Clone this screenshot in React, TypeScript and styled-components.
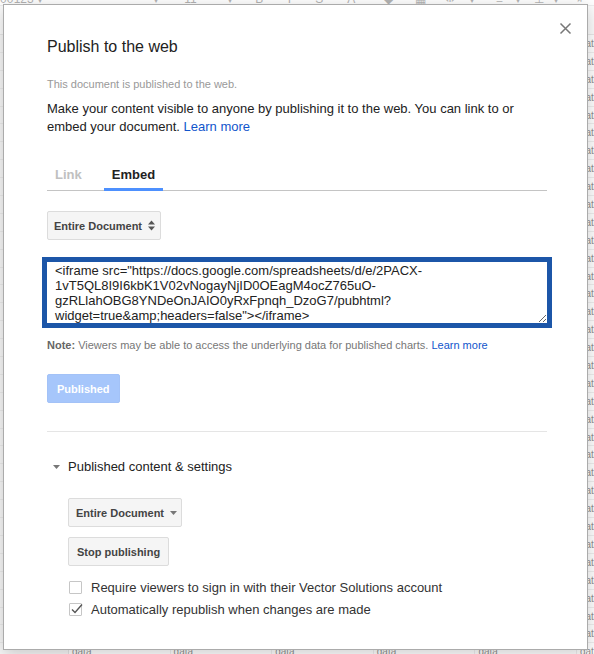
import { Fragment } from 'react';
import styled, { createGlobalStyle } from 'styled-components';

const GlobalStyle = createGlobalStyle`
  html, body {
    margin: 0;
    padding: 0;
    background: #fff;
  }
  body {
    font-family: Arial, "Liberation Sans", sans-serif;
  }
`;

const Page = styled.div`
  position: relative;
  width: 594px;
  height: 654px;
  overflow: hidden;
  background: #fff;
`;

/* ---------- spreadsheet behind the dialog ---------- */

const Toolbar = styled.div`
  display: flex;
  align-items: flex-end;
  height: 5px;
  overflow: hidden;
  color: #777;
  font-size: 12px;
  line-height: 12px;
`;

const ToolItem = styled.span<{ $w: number }>`
  flex: 0 0 ${(p) => p.$w}px;
  text-align: center;
  white-space: nowrap;
`;

const SheetHead = styled.div`
  height: 30px;
  border-top: 1px solid #e0e0e0;
  border-bottom: 1px solid #d8d8d8;
  box-sizing: border-box;
  background: #fafafa;
`;

const Grid = styled.div`
  display: grid;
  grid-template-columns: 69px repeat(6, 101.6px);
  grid-auto-rows: 17.9px;
`;

const RowHead = styled.div`
  background: #f3f3f3;
  border-right: 1px solid #d0d0d0;
  border-bottom: 1px solid #dcdcdc;
  box-sizing: border-box;
`;

const Cell = styled.div`
  box-sizing: border-box;
  border-right: 1px solid #e2e2e2;
  border-bottom: 1px solid #e2e2e2;
  padding-left: 3px;
  font-size: 10px;
  line-height: 17px;
  color: #333;
  white-space: nowrap;
  overflow: hidden;
`;

const Veil = styled.div`
  position: absolute;
  inset: 0;
  background: rgba(255, 255, 255, 0.45);
`;

/* ---------- dialog ---------- */

const Dialog = styled.div`
  position: absolute;
  left: 3px;
  top: 4px;
  width: 585px;
  height: 646px;
  box-sizing: border-box;
  padding: 32px 40px 0 43px;
  background: #fff;
  border: 1px solid rgba(0, 0, 0, 0.33);
  box-shadow: 0 4px 16px rgba(0, 0, 0, 0.2);
  color: #222;
`;

const CloseButton = styled.button`
  position: absolute;
  top: 17px;
  right: 15px;
  width: 13px;
  height: 13px;
  padding: 0;
  border: 0;
  background: none;
  display: flex;
`;

const Title = styled.h1`
  margin: 0;
  font-size: 16px;
  line-height: 20px;
  font-weight: normal;
  color: #222;
`;

const Status = styled.div`
  margin-top: 20px;
  font-size: 11px;
  line-height: 14px;
  color: #999;
`;

const Lead = styled.p`
  margin: 9px 0 0;
  font-size: 13px;
  line-height: 18px;
  color: #222;
`;

const Link = styled.a`
  color: #15c;
  text-decoration: none;
`;

const TabBar = styled.div`
  display: flex;
  gap: 14px;
  margin-top: 31px;
  border-bottom: 1px solid #c4c4c4;
`;

const Tab = styled.div<{ $active?: boolean }>`
  padding: 0 8px 5px;
  font-size: 13px;
  line-height: 16px;
  font-weight: bold;
  color: ${(p) => (p.$active ? '#222' : '#c0c0c0')};
  border-bottom: 3px solid ${(p) => (p.$active ? '#4d90fe' : 'transparent')};
  margin-bottom: -1px;
`;

const GreyButton = styled.button<{ $pad: string }>`
  display: inline-flex;
  align-items: center;
  gap: 6px;
  height: 29px;
  box-sizing: border-box;
  padding: ${(p) => p.$pad};
  border: 1px solid #dcdcdc;
  border-radius: 2px;
  background: #f5f5f5;
  font-family: inherit;
  font-size: 11px;
  font-weight: bold;
  color: #444;
  white-space: nowrap;
`;

const Block = styled.div<{ $top: number }>`
  margin-top: ${(p) => p.$top}px;
`;

const EmbedCode = styled.textarea`
  display: block;
  margin: 17px 0 0 -5px;
  width: 510px;
  height: 71px;
  box-sizing: border-box;
  border: 5px solid #1c56a8;
  padding: 1px 8px;
  font-family: inherit;
  font-size: 13px;
  line-height: 15px;
  color: #222;
  background: #fff;
  outline: none;
  overflow: hidden;
  white-space: pre;
`;

const Note = styled.div`
  margin-top: 10px;
  font-size: 11px;
  line-height: 14px;
  color: #777;

  b {
    color: #666;
  }
`;

const PrimaryButton = styled.button`
  display: block;
  margin-top: 22px;
  height: 29px;
  box-sizing: border-box;
  padding: 0 9px;
  border: 1px solid #a3c2f7;
  border-radius: 2px;
  background: #a6c6fb;
  font-family: inherit;
  font-size: 11px;
  font-weight: bold;
  color: #fff;
`;

const Divider = styled.hr`
  margin: 28px 0 0;
  border: 0;
  height: 1px;
  background: #e5e5e5;
`;

const Expander = styled.div`
  display: flex;
  align-items: center;
  gap: 8px;
  margin-top: 26px;
  padding-left: 6px;
  font-size: 13px;
  line-height: 18px;
  color: #222;
`;

const Settings = styled.div`
  padding-left: 21px;
`;

const CheckRow = styled.label`
  display: flex;
  align-items: center;
  gap: 9px;
  height: 22px;
  padding-left: 1px;
  font-size: 13px;
  color: #333;
`;

const Box = styled.span`
  position: relative;
  flex: 0 0 13px;
  width: 13px;
  height: 13px;
  box-sizing: border-box;
  border: 1px solid #c6c6c6;
  border-radius: 1px;
  background: #fff;

  svg {
    position: absolute;
    left: 0;
    top: -2px;
  }
`;

const UpDown = () => (
  <svg width="7" height="11" viewBox="0 0 7 11">
    <path d="M0 4.5 L3.5 0.5 L7 4.5 Z M0 6.5 L3.5 10.5 L7 6.5 Z" fill="#555" />
  </svg>
);

const Caret = ({ color }: { color: string }) => (
  <svg width="7" height="4" viewBox="0 0 7 4">
    <path d="M0 0 L7 0 L3.5 4 Z" fill={color} />
  </svg>
);

const Checkbox = ({ checked }: { checked?: boolean }) => (
  <Box>
    {checked && (
      <svg width="14" height="14" viewBox="0 0 14 14">
        <path d="M2 7.5 L5 10.5 L12 2.5" fill="none" stroke="#555" strokeWidth="1.4" />
      </svg>
    )}
  </Box>
);

const embedCode = [
  '<iframe src="https://docs.google.com/spreadsheets/d/e/2PACX-',
  '1vT5QL8I9I6kbK1V02vNogayNjID0OEagM4ocZ765uO-',
  'gzRLlahOBG8YNDeOnJAIO0yRxFpnqh_DzoG7/pubhtml?',
  'widget=true&amp;headers=false"></iframe>',
].join('\n');

const tools: [string, number][] = [
  ['00', 12], ['123 ▾', 30], ['', 108], ['▾', 10], ['', 22], ['11', 14], ['', 28], ['▾', 10],
  ['', 18], ['B', 12], ['', 18], ['I', 12], ['', 18], ['S', 12], ['', 20], ['A', 12], ['', 24],
  ['◆', 14], ['', 18], ['▦', 14], ['', 16], ['⇹', 14], ['', 10], ['▾', 10], ['', 16], ['≡', 12],
  ['', 8], ['▾', 10], ['', 10], ['⊥', 12], ['', 6], ['▾', 10], ['', 10], ['⇥', 12],
];

const ROWS = 35;
const COLS = 6;

export default function App() {
  const rows = Array.from({ length: ROWS });
  const cols = Array.from({ length: COLS });

  return (
    <>
      <GlobalStyle />
      <Page>
        <Toolbar>
          {tools.map(([t, w], i) => (
            <ToolItem key={i} $w={w}>
              {t}
            </ToolItem>
          ))}
        </Toolbar>
        <SheetHead />
        <Grid>
          {rows.map((_, r) => (
            <Fragment key={r}>
              <RowHead />
              {cols.map((_, c) => (
                // only the cells that peek out around the dialog carry their text
                <Cell key={c}>{r === ROWS - 1 || c === COLS - 1 ? 'data' : ''}</Cell>
              ))}
            </Fragment>
          ))}
        </Grid>
        <Veil />

        <Dialog role="dialog" aria-label="Publish to the web">
          <CloseButton aria-label="Close">
            <svg width="13" height="13" viewBox="0 0 13 13">
              <path d="M1.5 1.5 L11.5 11.5 M11.5 1.5 L1.5 11.5" stroke="#777" strokeWidth="1.5" />
            </svg>
          </CloseButton>

          <Title>Publish to the web</Title>
          <Status>This document is published to the web.</Status>
          <Lead>
            Make your content visible to anyone by publishing it to the web. You can link to or
            embed your document. <Link href="#">Learn more</Link>
          </Lead>

          <TabBar>
            <Tab>Link</Tab>
            <Tab $active>Embed</Tab>
          </TabBar>

          <Block $top={20}>
            <GreyButton $pad="0 5px 0 6px">
              Entire Document
              <UpDown />
            </GreyButton>
          </Block>

          <EmbedCode readOnly value={embedCode} />

          <Note>
            <b>Note:</b> Viewers may be able to access the underlying data for published charts.{' '}
            <Link href="#">Learn more</Link>
          </Note>

          <PrimaryButton disabled>Published</PrimaryButton>

          <Divider />

          <Expander>
            <Caret color="#777" />
            Published content &amp; settings
          </Expander>

          <Settings>
            <Block $top={22}>
              <GreyButton $pad="0 4px 0 7px">
                Entire Document
                <Caret color="#777" />
              </GreyButton>
            </Block>
            <Block $top={10}>
              <GreyButton $pad="0 8px">Stop publishing</GreyButton>
            </Block>
            <Block $top={10}>
              <CheckRow>
                <Checkbox />
                Require viewers to sign in with their Vector Solutions account
              </CheckRow>
              <CheckRow>
                <Checkbox checked />
                Automatically republish when changes are made
              </CheckRow>
            </Block>
          </Settings>
        </Dialog>
      </Page>
    </>
  );
}
